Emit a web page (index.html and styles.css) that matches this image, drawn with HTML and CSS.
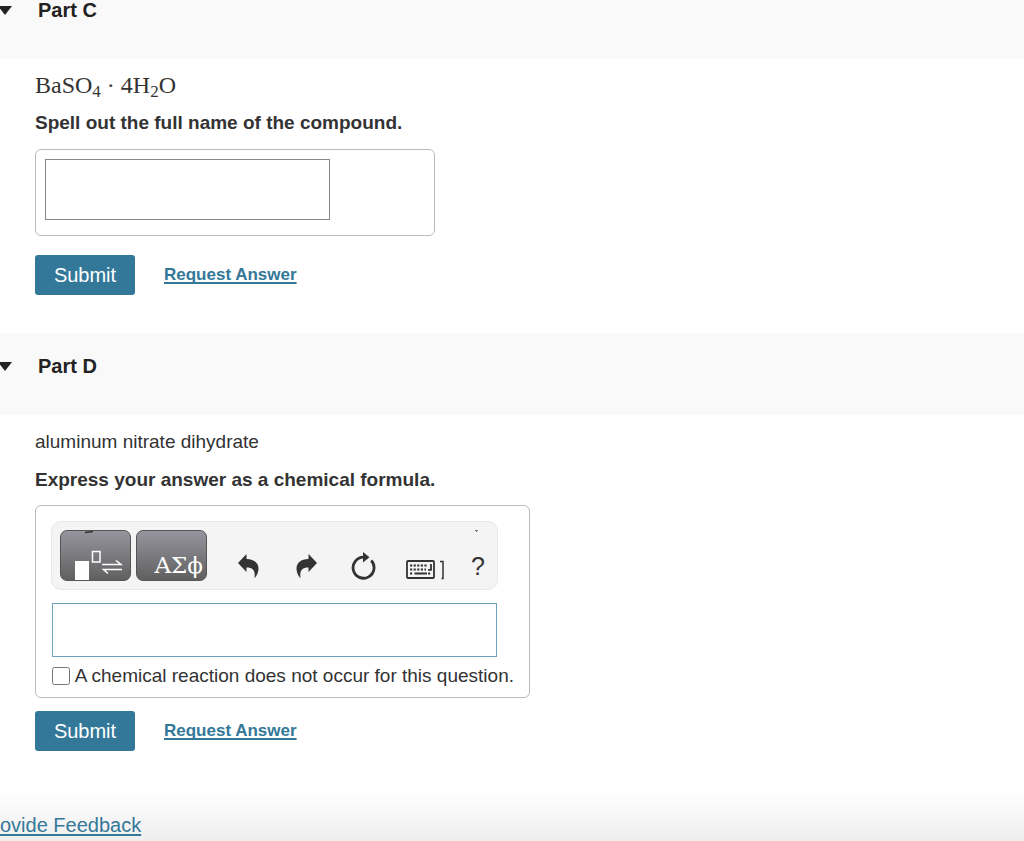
FILE: index.html
```html
<!DOCTYPE html>
<html lang="en">
<head>
<meta charset="utf-8">
<title>Chemistry assignment</title>
<link rel="stylesheet" href="styles.css">
</head>
<body>
<main>
  <section class="part">
    <header class="part-header first">
      <svg class="caret" viewBox="0 0 14 9" aria-hidden="true"><path d="M0 0H14L7 9Z"/></svg>
      <h2>Part C</h2>
    </header>
    <div class="part-body">
      <p class="formula">BaSO<sub>4</sub><span class="dot">·</span>4H<sub>2</sub>O</p>
      <label class="instruction" for="name">Spell out the full name of the compound.</label>
      <div class="answer name-box"><input id="name" class="name-input" type="text"></div>
      <div class="actions">
        <button class="submit" type="button">Submit</button>
        <a class="request" href="#">Request Answer</a>
      </div>
    </div>
  </section>
  <section class="part">
    <header class="part-header">
      <svg class="caret" viewBox="0 0 14 9" aria-hidden="true"><path d="M0 0H14L7 9Z"/></svg>
      <h2>Part D</h2>
    </header>
    <div class="part-body">
      <p class="compound">aluminum nitrate dihydrate</p>
      <label class="instruction" for="formula">Express your answer as a chemical formula.</label>
      <div class="answer formula-box">
        <div class="toolbar">
          <button class="palette" type="button" aria-label="Templates">
            <svg viewBox="0 0 70 50"><path d="M24 1.500 32 .5" stroke="#333" stroke-width="1.5"/><path d="M14 30H28V49H14Z" fill="#fff"/><path d="M31.500 20.500H39V31H31.500Z" fill="none" stroke="#fff" stroke-width="1.500"/><path d="M41 33.500H60L55 29.500M61 38.500H42.500L47 42.500" fill="none" stroke="#fff" stroke-width="1.500"/></svg>
          </button>
          <button class="palette symbols" type="button" aria-label="Symbols">ΑΣϕ</button>
          <button class="tool undo" type="button" aria-label="Undo"><svg viewBox="0 0 21 24"><path d="M0 9 8.500 0V5C16 5 20.500 9 20.500 14.500C20.500 18 19 21.500 16.500 24.500C17.500 17 15.500 13.500 8.500 13.500V18Z"/></svg></button>
          <button class="tool redo" type="button" aria-label="Redo"><svg viewBox="0 0 21 24"><path d="M21 9 12.500 0V5C5 5 .5 9 .5 14.500C.5 18 2 21.500 4.500 24.500C3.500 17 5.500 13.500 12.500 13.500V18Z"/></svg></button>
          <button class="tool reset" type="button" aria-label="Reset"><svg viewBox="0 0 26 28"><path d="M20.200 8.500A10.500 10.500 0 1 1 12.500 5.200" fill="none" stroke="#333" stroke-width="2.800"/><path d="M12 0 18.500 5.200 12 10.500Z"/></svg></button>
          <button class="tool keyboard" type="button" aria-label="Keyboard shortcuts"><svg viewBox="0 -8 38 28"><rect x="1" y="1" width="27" height="17" rx="1" fill="none" stroke="#333" stroke-width="1.800"/><path d="M4 5.500H22M4 9.500H20M4 13.500H7M22 13.500H25" fill="none" stroke="#333" stroke-width="2.200" stroke-dasharray="2.200 1.400"/><path d="M8.500 13.500H21M25 4V9.800H22" fill="none" stroke="#333" stroke-width="1.800"/><path d="M34 1.500H37V18.500H35.500" fill="none" stroke="#333" stroke-width="1.500"/></svg></button>
          <button class="tool help" type="button" aria-label="Help">?</button>
          <svg class="speck" viewBox="0 0 3 2" aria-hidden="true"><path d="M0 0H3V1H2V2H1V1H0Z"/></svg>
        </div>
        <input id="formula" class="formula-input" type="text">
        <label class="no-reaction"><input type="checkbox">A chemical reaction does not occur for this question.</label>
      </div>
      <div class="actions">
        <button class="submit" type="button">Submit</button>
        <a class="request" href="#">Request Answer</a>
      </div>
    </div>
  </section>
</main>
<footer class="footer"><a href="#">ovide Feedback</a></footer>
</body>
</html>
```
FILE: styles.css
```css
* { box-sizing: border-box; }
body {
  margin: 0;
  min-height: 100vh;
  display: flex;
  flex-direction: column;
  overflow-x: hidden;
  background: #fff;
  color: #333;
  font: 19px/24px "Liberation Sans", Arial, sans-serif;
}
main { flex: 1; }
h2, p { margin: 0; }
button { font-family: inherit; border: 0; padding: 0; cursor: pointer; }
a { color: #347899; text-decoration-thickness: 2px; text-underline-offset: 2px; text-decoration-skip-ink: none; }

.part-header {
  display: flex;
  align-items: center;
  gap: 26px;
  height: 82px;
  padding-bottom: 16px;
  background: #f9f9f9;
  color: #222;
}
.part-header.first { height: 59px; padding-bottom: 39px; }
.part-header h2 { font-size: 20px; line-height: 24px; }
.caret { width: 14px; height: 9px; margin-left: -2px; fill: #222; }

.part-body { padding: 14px 35px 38px; }
.formula {
  font: 24px/24px "Liberation Serif", "Times New Roman", serif;
}
.formula sub { font-size: 17px; line-height: 0; vertical-align: -4px; }
.dot { margin: 0 6px; }
.compound { padding-top: 1px; }
.instruction { display: block; margin: 14px 0; font-weight: bold; }
.compound + .instruction { margin-bottom: 13px; }

.answer { max-width: 100%; border: 1px solid #bbb; border-radius: 6px; }
.name-box { width: 400px; height: 87px; padding: 9px; }
.name-input { width: 285px; height: 61px; border: 1px solid #888; display: block; max-width: 100%; }
.formula-box { width: 495px; padding: 15px 15px 9px; }

.actions { display: flex; align-items: center; gap: 29px; margin-top: 19px; }
.formula-box + .actions { margin-top: 13px; }
.submit {
  width: 100px;
  height: 40px;
  border-radius: 3px;
  background: #347899;
  color: #fff;
  font-size: 20px;
}
.request { font-size: 17px; font-weight: bold; }

.toolbar {
  position: relative;
  display: flex;
  align-items: center;
  width: 447px;
  max-width: 100%;
  height: 69px;
  padding: 0 8px;
  border: 1px solid #e8e8e8;
  border-radius: 10px;
  background: #f4f4f4;
}
.palette {
  flex: none;
  width: 71px;
  height: 51px;
  margin-right: 5px;
  overflow: hidden;
  border: 1px solid #555;
  border-radius: 7px;
  background: linear-gradient(#96959e, #606060);
  color: #fff;
}
.palette svg { display: block; width: 70px; height: 50px; }
.symbols { padding: 19px 3px 0 0; text-align: right; font: 23px/30px "DejaVu Serif", serif; }
.tool { flex: none; margin-top: 20px; background: none; color: #333; }
.tool svg { display: block; width: 100%; fill: #333; }
.undo { width: 21px; margin-left: 26px; }
.redo { width: 21px; margin-left: 37px; }
.reset { width: 26px; margin-left: 34px; }
.keyboard { width: 38px; margin-left: 29px; }
.help { margin-left: 27px; font: 25px/28px "Liberation Sans", sans-serif; }
.speck { position: absolute; top: 8px; right: 19px; width: 3px; height: 2px; fill: #777; }

.formula-input {
  display: block;
  width: 445px;
  max-width: 100%;
  height: 54px;
  margin: 13px 0 7px 1px;
  border: 1px solid #6ba3bd;
}
.no-reaction { display: flex; align-items: center; gap: 5px; margin-left: 1px; white-space: nowrap; }
.no-reaction input { width: 18px; height: 18px; margin: 0; }

.footer {
  height: 50px;
  padding-top: 22px;
  background: linear-gradient(#fff, #eee);
  font-size: 20px;
  line-height: 24px;
}
```
